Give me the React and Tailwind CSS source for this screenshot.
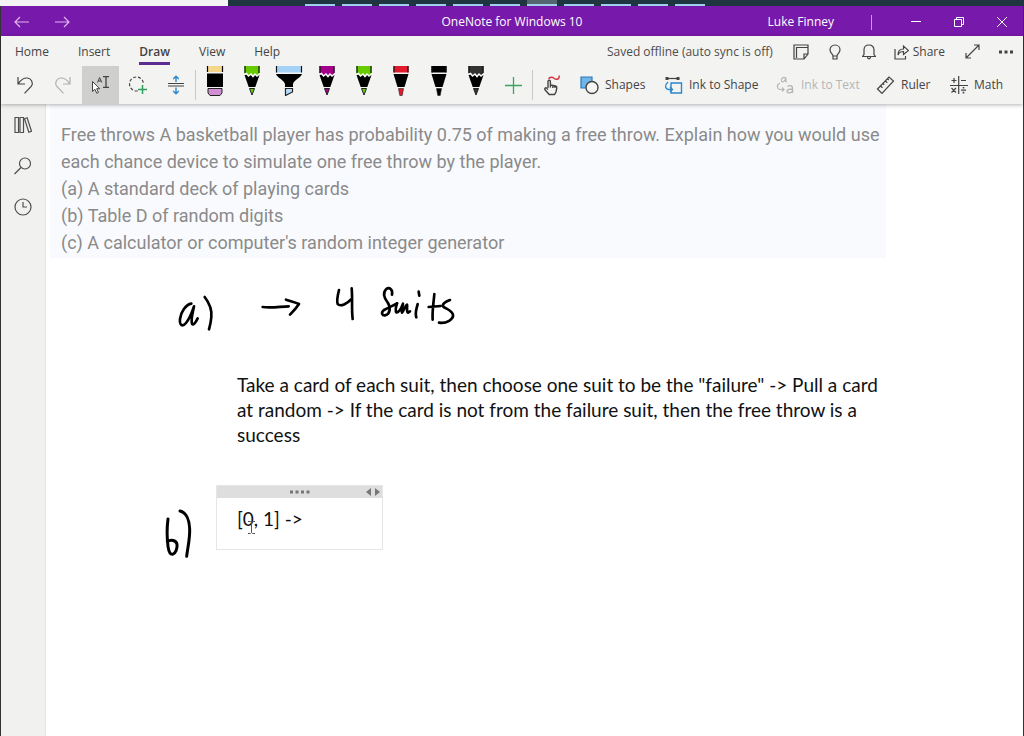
import React from "react";

function Icon({ w = 20, h = 20, label, className = "", children }) {
  return (
    <svg
      width={w}
      height={h}
      viewBox={`0 0 ${w} ${h}`}
      fill="none"
      stroke="currentColor"
      strokeWidth="1.2"
      className={`shrink-0 ${className}`}
      aria-hidden={label ? undefined : true}
      aria-label={label}
    >
      {children}
    </svg>
  );
}

const Undo = () => (
  <Icon>
    <path d="M3 2v7h7M3.4 8.6C6 4.5 9 2.8 12.4 3c4 .4 6.2 4.6 4 8.200L9.500 18.300" />
  </Icon>
);

const Redo = () => (
  <Icon className="text-[#b0b0b0]">
    <path d="M17 2v7h-7M16.600 8.600C14 4.500 11 2.800 7.600 3c-4 .4-6.200 4.600-4 8.200l6.900 7.100" />
  </Icon>
);

const SelectText = () => (
  <Icon w={20} h={20}>
    <path d="M2.500 6.500v10l2.400-2.200 1.900 4 1.700-.8-1.900-3.800h3.200z" fill="#fff" strokeWidth="1" />
    <path d="M7.500 7.500 9.600 2.600l2.200 4.900M8.200 6h2.900" strokeWidth="1" />
    <path d="M13 1.600h6M13 12.400h6M16 1.600v10.800" strokeWidth="1.300" />
  </Icon>
);

const Lasso = () => (
  <Icon w={20} h={20}>
    <circle cx="8.500" cy="9" r="7" strokeDasharray="3 1.900" />
    <path d="M10 9h9v9h-9z" fill="#f3f3f2" stroke="none" />
    <path d="M14.500 10v9M10 14.500h9" stroke="#2f9e5b" strokeWidth="1.500" />
  </Icon>
);

const InsertSpace = () => (
  <Icon w={18} h={20}>
    <path d="M1 8.500h16M1 11h16" />
    <path d="M9 7V1.500M6.200 4 9 1.300 11.800 4M9 12.500v6M6.200 16 9 18.700 11.800 16" stroke="#2b88cc" strokeWidth="1.400" />
  </Icon>
);

const Eraser = () => (
  <Icon w={18} h={30} label="Eraser">
    <path d="M1.500 0h15v6h-15z" fill="#f5d78c" stroke="none" />
    <path d="M1.500 0v6M16.500 0v6" stroke="#000" />
    <path d="M1 7.500h16V21H1z" fill="#000" stroke="none" />
    <path d="M2 22.500h14V27l-2 2.500H4L2 27z" fill="#cf8fd0" stroke="#222" strokeWidth="1" />
  </Icon>
);

function Pencil({ color }) {
  return (
    <Icon w={16} h={30} label="Pencil">
      <path d="M.5 0h15v9H.5z" fill={color} stroke="none" />
      <path d="M1 0v7M15 0v7" stroke="#111" />
      <path d="M.5 9h15L11.300 21H4.700z" fill="#000" stroke="none" />
      <path d="M0 8.500 2.500 7.500l2 2.500L7 8l2 2.500L11 8l2 2 3-2.500" stroke="#fff" strokeWidth="1.500" />
      <path d="M5.500 22.500h5L8 29z" fill={color} stroke="#222" strokeWidth="1" />
    </Icon>
  );
}

function Pen({ color }) {
  return (
    <Icon w={16} h={30} label="Pen">
      <path d="M.5 0h15v6.500H.5z" fill={color} stroke="none" />
      <path d="M1 0v6.500M15 0v6.500" stroke="#111" />
      <path d="M.5 8h15L11.500 21h-7z" fill="#000" stroke="none" />
      <path d="M5.500 22.500h5l-1.300 7H6.800z" fill={color} stroke="#222" strokeWidth=".6" />
    </Icon>
  );
}

const Highlighter = () => (
  <Icon w={28} h={30} label="Highlighter">
    <path d="M1.500 0h25v6.500h-25z" fill="#a5d3f8" stroke="none" />
    <path d="M1.500 0v6.500M26.500 0v6.500" stroke="#111" />
    <path d="M1 8h26c-1 3.500-8 6-9 10v3h-8v-3C9 14 2 11.500 1 8z" fill="#000" stroke="none" />
    <path d="M10.500 22.500h7v3.500l-7 3.500z" fill="#b5dcfa" stroke="#222" />
  </Icon>
);

const Plus = () => (
  <Icon w={17} h={17}>
    <path d="M8.500 0v17M0 8.500h17" stroke="#3ba55d" strokeWidth="1.300" />
  </Icon>
);

const TouchDraw = () => (
  <Icon w={20} h={22}>
    <path
      d="M6 14V7.500c0-1.700 2.400-1.700 2.400 0V11l5.200 1c1 .3 1.400 1 1.200 2l-.8 4-1.500 2.500H7.200L3 15.800c-1-1.600.8-2.600 1.800-1.400L6 15.600M8.400 11v2.500M10.800 11.500v2.500M13 12v2"
      strokeWidth="1.400"
    />
    <path d="M6.500 5C8 2.500 10.500 3 12 4.200c2.500 2 6 1 5-2.700" stroke="#d9303e" strokeWidth="1.400" />
  </Icon>
);

const ShapesIcon = () => (
  <Icon w={19} h={20}>
    <path d="M1 2h11v11H1z" fill="#71b6ea" stroke="#2b79b8" />
    <circle cx="12" cy="12.500" r="6" fill="#f5f5f4" strokeWidth="1.400" />
  </Icon>
);

const InkToShape = () => (
  <Icon w={19} h={20}>
    <path d="M3 3.500h12" />
    <path d="M1.500 2h3v3h-3zM12.500 2h3v3h-3z" fill="#444" stroke="none" />
    <path d="M7 8h10.500v10H7z" stroke="#2b88cc" strokeWidth="1.400" />
    <path d="M4 7C.5 10 1 14 4.500 14.500H8M6 12l2.500 2.500L6 17" stroke="#2b88cc" strokeWidth="1.400" />
  </Icon>
);

const InkToText = () => (
  <Icon w={19} h={20}>
    <path d="M10 3C7 1 5 4 5.500 6c.7 2 3 1 4.500-3 0 1.500-1 4 1 3.800" />
    <path d="M4 8C0 10 1 14 4 14.500h4M6 12.500l2 2-2 2" />
    <path d="M11.500 11.500c2-1.500 5-1 5 1.500V18M16.500 14c-3 0-5.500.3-5.500 2.300 0 2.200 4 2.200 5.500-.3" strokeWidth="1.400" />
  </Icon>
);

const RulerIcon = () => (
  <Icon w={19} h={20}>
    <path d="M1.500 14 13 2l4.500 4L6 18.500zM4.500 11l2 1.800M7 8.500l1.300 1.200M9.300 6l2 1.800M11.500 3.800l1.300 1.200" />
  </Icon>
);

const MathIcon = () => (
  <Icon w={19} h={20}>
    <path d="M1 10.500h18M9.700 1v18M2.500 5.500h5M5 3v5M12 5.500h5M2.500 13l4.500 4.500M7 13l-4.500 4.500M12 15.200h5" />
    <path d="M13.700 12h1.600v1.600h-1.600zM13.700 16.800h1.600v1.600h-1.600z" fill="currentColor" stroke="none" />
  </Icon>
);

function Arrow({ flip }) {
  return (
    <Icon w={15} h={12} className={flip ? "rotate-180" : ""}>
      <path d="M15 6H1M6 1 1 6l5 5" />
    </Icon>
  );
}

function ToolButton({ label, active, children }) {
  return (
    <button
      aria-label={label}
      className={`flex h-full flex-1 items-center justify-center ${active ? "bg-[#cfcfcd]" : ""}`}
    >
      {children}
    </button>
  );
}

function PenButton({ label, children }) {
  return (
    <button aria-label={label} className="flex h-full flex-1 items-start justify-center">
      {children}
    </button>
  );
}

function LabelButton({ icon, label, className }) {
  return (
    <button className={`flex h-full items-center gap-[6px] whitespace-nowrap ${className}`}>
      {icon}
      <span>{label}</span>
    </button>
  );
}

const Divider = () => <span className="h-[30px] w-px shrink-0 bg-[#c8c8c8]" />;

function DesktopStrip() {
  return (
    <div className="flex h-[6px] bg-[#1f3540]">
      <div className="w-[228px] bg-[#f4f4f4]" />
      <div className="flex gap-[7px] pl-[77px]">
        {Array.from({ length: 11 }, (_, i) => (
          <div key={i} className={`flex w-[30px] items-end ${i === 6 ? "bg-[#54666f]" : ""}`}>
            <div className="h-[2px] w-full bg-[#9fd0ee]" />
          </div>
        ))}
      </div>
    </div>
  );
}

function TitleBar() {
  return (
    <header className="grid h-[30px] grid-cols-[1fr_auto_1fr] items-center bg-[#7719aa] pt-[2px] text-[12px] text-white">
      <div className="flex items-center gap-[26px] pl-[13px] text-[#e0b8f0]">
        <button aria-label="Back"><Arrow /></button>
        <button aria-label="Forward"><Arrow flip /></button>
      </div>
      <h1>OneNote for Windows 10</h1>
      <div className="flex items-center justify-end">
        <span>Luke Finney</span>
        <span className="ml-[37px] h-[15px] w-px bg-[#c79add]" />
        <button aria-label="Minimize" className="ml-[22px] flex w-[43px] justify-center">
          <Icon w={10} h={10}><path d="M0 4.500h10" strokeWidth="1" /></Icon>
        </button>
        <button aria-label="Restore" className="flex w-[43px] justify-center">
          <Icon w={10} h={10}><path d="M.5 2.500h7v7h-7zM2.500 2.500v-2h7v7h-2" strokeWidth="1" /></Icon>
        </button>
        <button aria-label="Close" className="flex w-[43px] justify-center">
          <Icon w={10} h={10}><path d="m0 0 10 10M10 0 0 10" strokeWidth="1" /></Icon>
        </button>
      </div>
    </header>
  );
}

function MenuRow() {
  return (
    <div className="flex h-[30px] items-center justify-between pr-[9px] pl-[14px]">
      <nav className="flex h-full gap-[29px]">
        {["Home", "Insert", "Draw", "View", "Help"].map((tab) => (
          <button
            key={tab}
            className={`flex h-full flex-col items-center justify-between pt-[7px] pb-px ${tab === "Draw" ? "font-semibold" : ""}`}
          >
            {tab}
            <span className={`h-[3px] w-full ${tab === "Draw" ? "bg-[#5c2d91]" : ""}`} />
          </button>
        ))}
      </nav>
      <div className="flex items-center pt-px">
        <span className="text-[#4d4d4d]">Saved offline (auto sync is off)</span>
        <button aria-label="Feed" className="ml-[20px]">
          <Icon w={16} h={16}>
            <path d="M1 1h14v9l-4 5H1zM15 10h-4v5M3.500 14V3.500H15" />
          </Icon>
        </button>
        <button aria-label="Tell me" className="ml-[19px]">
          <Icon w={14} h={16}>
            <path d="M5 12c0-2-3-3-3-6.200C2 3 4.200 1 7 1s5 2 5 4.800C12 9 9 10 9 12zM5 12v3h4v-3" />
          </Icon>
        </button>
        <button aria-label="Notifications" className="ml-[20px]">
          <Icon w={14} h={16}>
            <path d="M.5 12.500h13L12 10.500V6c0-3-2-5-5-5S2 3 2 6v4.500zM5.500 12.800c0 2.700 3 2.700 3 0" />
          </Icon>
        </button>
        <button className="ml-[18px] flex items-center gap-1">
          <Icon w={15} h={16}>
            <path d="M1 5v10h10.500v-3M4 11c0-4 2-6 5.500-6V2l5 4.500-5 4V7.500C7 7.500 5 8.500 4 11z" />
          </Icon>
          Share
        </button>
        <button aria-label="Full screen" className="ml-[20px]">
          <Icon w={15} h={15}>
            <path d="M1 14 14 1M9 1h5v5M1 9v5h5" />
          </Icon>
        </button>
        <button aria-label="More" className="ml-[18px]">
          <Icon w={16} h={6}>
            <path d="M1 1.500h3v3H1zM6.500 1.500h3v3h-3zM12 1.500h3v3h-3z" fill="currentColor" stroke="none" />
          </Icon>
        </button>
      </div>
    </div>
  );
}

function Toolbar() {
  return (
    <div className="flex h-[38px] items-center pl-[5px]">
      <div className="flex h-full w-[189px] shrink-0">
        <ToolButton label="Undo"><Undo /></ToolButton>
        <ToolButton label="Redo"><Redo /></ToolButton>
        <ToolButton label="Select objects or type text" active><SelectText /></ToolButton>
        <ToolButton label="Lasso select"><Lasso /></ToolButton>
        <ToolButton label="Insert or remove space"><InsertSpace /></ToolButton>
      </div>
      <Divider />
      <div className="flex h-full w-[336px] shrink-0">
        <PenButton label="Eraser"><Eraser /></PenButton>
        <PenButton label="Green pencil"><Pencil color="#66cc00" /></PenButton>
        <PenButton label="Blue highlighter"><Highlighter /></PenButton>
        <PenButton label="Purple pencil"><Pencil color="#a3008c" /></PenButton>
        <PenButton label="Green pencil 2"><Pencil color="#66cc00" /></PenButton>
        <PenButton label="Red pen"><Pen color="#e11b2c" /></PenButton>
        <PenButton label="Black pen"><Pen color="#000000" /></PenButton>
        <PenButton label="Grey pencil"><Pencil color="#333333" /></PenButton>
        <ToolButton label="Add pen"><Plus /></ToolButton>
      </div>
      <Divider />
      <div className="flex h-full w-[47px] shrink-0 pr-[10px]">
        <ToolButton label="Draw with mouse or touch"><TouchDraw /></ToolButton>
      </div>
      <LabelButton icon={<ShapesIcon />} label="Shapes" className="w-[84px]" />
      <LabelButton icon={<InkToShape />} label="Ink to Shape" className="w-[112px]" />
      <LabelButton icon={<InkToText />} label="Ink to Text" className="w-[100px] text-[#b5b5b5]" />
      <LabelButton icon={<RulerIcon />} label="Ruler" className="w-[73px]" />
      <LabelButton icon={<MathIcon />} label="Math" className="" />
    </div>
  );
}

function SideRail() {
  return (
    <aside className="flex w-[45px] shrink-0 flex-col items-center gap-[23px] border-r border-[#e4e4e4] bg-[#f1f1f0] pt-[12px] text-[#505050]">
      <button aria-label="Notebooks">
        <Icon w={18} h={18}>
          <path d="M1 1.500h3.500v15H1zM6 1.500h3.500v15H6zM10.500 2.800l2.600-1.100 4.400 13.500-2.700 1.100z" />
        </Icon>
      </button>
      <button aria-label="Search">
        <Icon w={18} h={18}>
          <circle cx="11" cy="6.500" r="5.500" />
          <path d="M7 10.500.5 17" />
        </Icon>
      </button>
      <button aria-label="Recent notes">
        <Icon w={18} h={18}>
          <circle cx="9" cy="9" r="8" />
          <path d="M9 4v5h4" />
        </Icon>
      </button>
    </aside>
  );
}

const problem = [
  "Free throws A basketball player has probability 0.75 of making a free throw. Explain how you would use",
  "each chance device to simulate one free throw by the player.",
  "(a) A standard deck of playing cards",
  "(b) Table D of random digits",
  "(c) A calculator or computer's random integer generator",
];

const answer = [
  'Take a card of each suit, then choose one suit to be the "failure" -> Pull a card',
  "at random -> If the card is not from the failure suit, then the free throw is a",
  "success",
];

function PageCanvas() {
  return (
    <main className="relative min-w-0 flex-1 overflow-hidden bg-white">
      <section className="ml-[4px] w-[836px] bg-[#f9fafe] pt-[17px] pb-[2px] pl-[11px] font-['Roboto',sans-serif] text-[18px] leading-[27px] text-[#8a8a8a]">
        {problem.map((line) => (
          <p key={line} className="whitespace-nowrap">{line}</p>
        ))}
      </section>

      <svg
        className="absolute top-[171px] left-[114px]"
        width="310"
        height="65"
        viewBox="0 0 930 195"
        fill="none"
        stroke="#000"
        strokeWidth="8"
        strokeLinecap="round"
        strokeLinejoin="round"
        aria-label="Ink drawing"
      >
        <path d="M94 86C78 88 62 112 60 132c-2 20 8 24 18 12 8-10 18-32 24-50-4 18-10 42-6 52 4 8 12-6 17-16" />
        <path d="M134 66c14 18 22 40 20 60-1 14-4 26-7 37" />
        <path d="M308 96c24 4 50-1 78-2M378 74c14 5 27 8 39 13-8 12-17 22-27 32" />
        <path d="M537 45c-4 16-8 32-4 42 8 10 30-2 40-14M575 40c3 30-1 60 3 92" />
        <g transform="translate(630 15)">
          <path d="M66 44C69 28 58 20 48 28 38 38 42 54 52 66 64 82 60 102 46 106 36 107 32 98 42 90 56 82 72 76 81 70" />
          <path d="M81 70C78 80 75 92 79 97 87 98 94 84 99 71 97 81 94 92 96 98 102 92 104 78 111 74 113 82 108 94 114 98L120 94" />
          <path d="M146 35 148 47M143 72C140 86 134 98 139 112" />
          <path d="M193 42C191 68 186 94 188 119M176 81C188 79 200 80 212 78" />
          <path d="M240 60C228 64 216 72 219 79 225 86 246 90 249 104 251 118 230 131 207 128" />
        </g>
      </svg>

      <div className="absolute top-[268px] left-[191px] font-['Lato',sans-serif] text-[19px] leading-[25px] text-[#111]">
        {answer.map((line) => (
          <p key={line} className="whitespace-nowrap">{line}</p>
        ))}
      </div>

      <svg
        className="absolute top-[371px] left-[104px]"
        width="50"
        height="90"
        viewBox="0 0 150 270"
        fill="none"
        stroke="#000"
        strokeWidth="9"
        strokeLinecap="round"
        strokeLinejoin="round"
        aria-label="Ink drawing"
      >
        <path d="M54 132c-4 30-3 58 0 82 2 14 7 25 14 24 8-2 15-18 13-30-2-12-18-16-29-8" />
        <path d="M90 108c18 4 28 26 29 54 1 30-6 56-9 82" />
      </svg>

      <section className="absolute top-[381px] left-[170px] h-[65px] w-[167px] border border-[#e6e6e6] bg-white">
        <div className="relative flex h-[12px] items-center justify-center bg-[#dedede] text-[#777]">
          <Icon w={22} h={4}>
            <path d="M1 .5h3v3H1zM6.500.5h3v3h-3zM12 .5h3v3h-3zM17.500.5h3v3h-3z" fill="currentColor" stroke="none" />
          </Icon>
          <Icon w={14} h={8} className="absolute right-[2px]">
            <path d="M5 0v8L0 4zM9 0v8l5-4z" fill="currentColor" stroke="none" />
          </Icon>
        </div>
        <p className="pt-[8px] pl-[20px] font-['Lato',sans-serif] text-[19px] leading-[25px] text-[#111]">
          [0, 1] -&gt;
        </p>
        <Icon w={7} h={13} className="absolute top-[35px] left-[31px] text-[#555]">
          <path d="M0 .5h2.500l1 1 1-1H7M3.500 1.500v10M0 12.500h2.500l1-1 1 1H7" strokeWidth="1" />
        </Icon>
      </section>
    </main>
  );
}

export default function App() {
  return (
    <div className="flex min-h-screen flex-col font-['Open_Sans',sans-serif] text-[12px] text-[#444]">
      <DesktopStrip />
      <div className="flex flex-1 flex-col border-x border-[#333]">
        <TitleBar />
        <div className="relative z-10 bg-[#f3f3f2] shadow-[0_1px_4px_rgba(0,0,0,0.3)]">
          <MenuRow />
          <Toolbar />
        </div>
        <div className="flex flex-1">
          <SideRail />
          <PageCanvas />
        </div>
      </div>
    </div>
  );
}
